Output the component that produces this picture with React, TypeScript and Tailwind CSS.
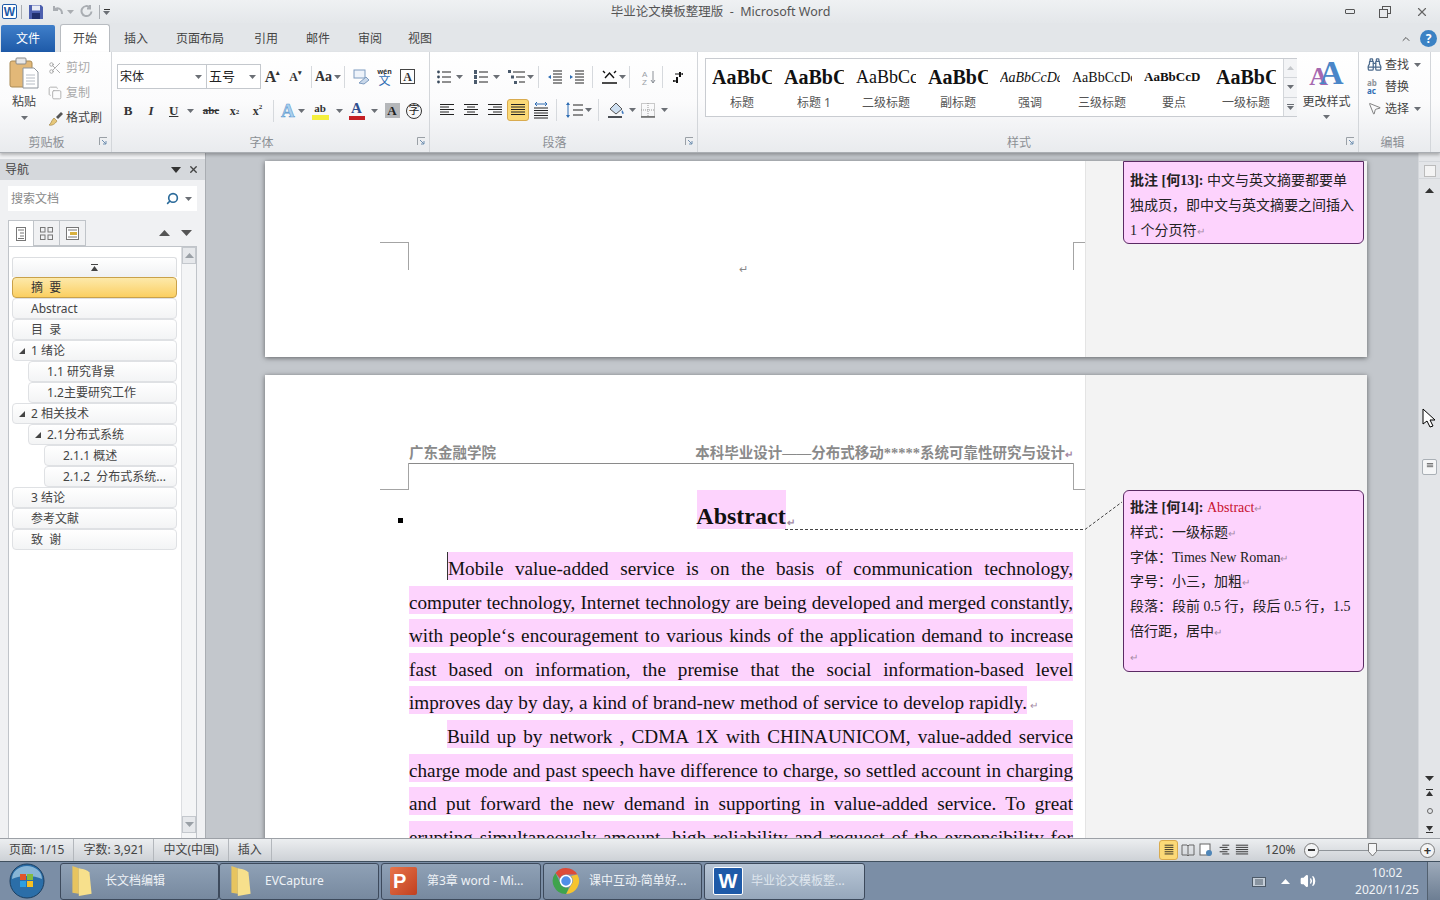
import type { ReactNode } from 'react';
import {
  Binoculars,
  ChevronUp,
  Copy,
  MousePointer2,
  Scissors,
  Search,
  Volume2,
  X,
} from 'lucide-react';

const serif = "font-['Liberation_Serif','Noto_Sans_CJK_SC',serif]";

function Caret({ className = '' }: { className?: string }) {
  return (
    <svg width="7" height="4" viewBox="0 0 7 4" className={`shrink-0 ${className}`}>
      <path d="M0 0h7L3.5 4z" fill="#6b6f75" />
    </svg>
  );
}

function Sep() {
  return <div className="h-[22px] w-px shrink-0 bg-[#d6d9dd]" />;
}

function Lines({ rows, size = 16 }: { rows: [number, number][]; size?: number }) {
  return (
    <svg width={size} height={size} viewBox="0 0 16 16">
      {rows.map(([a, b], i) => (
        <path key={i} d={`M${a} ${2.5 + i * 2.5}H${b}`} stroke="#222" strokeWidth="1" />
      ))}
    </svg>
  );
}

function Launcher() {
  return (
    <svg width="9" height="9" viewBox="0 0 9 9">
      <path d="M.5 8V.5H8" stroke="#9aa0a6" fill="none" />
      <path d="M3 3l4 4M7 4v3H4" stroke="#6f8fb0" fill="none" />
    </svg>
  );
}

function Group({ w, label, launcher = true, children }: { w: string; label: string; launcher?: boolean; children: ReactNode }) {
  return (
    <div className={`${w} flex h-full shrink-0 flex-col border-r border-[#d3d6da]`}>
      <div className="min-h-0 flex-1">{children}</div>
      <div className={`relative flex h-[21px] shrink-0 items-center justify-center pt-[2px] text-[12px] leading-none text-[#8b8f94] ${launcher ? 'pr-[18px]' : 'pr-[4px]'}`}>
        {label}
        {launcher && (
          <span className="absolute right-[3px] top-[6px] flex">
            <Launcher />
          </span>
        )}
      </div>
    </div>
  );
}

function BulletIcon() {
  return (
    <svg width="16" height="16" viewBox="0 0 16 16">
      {[3, 8, 13].map(y => (
        <g key={y}>
          <circle cx="2.5" cy={y} r="1.4" fill="#3a4a5c" />
          <path d={`M6 ${y}h9`} stroke="#222" />
        </g>
      ))}
    </svg>
  );
}

function NumberIcon() {
  return (
    <svg width="16" height="16" viewBox="0 0 16 16">
      {[3, 8, 13].map(y => (
        <g key={y}>
          <rect x="1" y={y - 2} width="3" height="4" fill="#4a5a6c" />
          <path d={`M6 ${y}h9`} stroke="#222" />
        </g>
      ))}
    </svg>
  );
}

function MultiIcon() {
  return (
    <svg width="18" height="16" viewBox="0 0 18 16">
      <rect x="0" y="1" width="3" height="3" fill="#4a5a6c" />
      <path d="M5 3h12" stroke="#222" />
      <rect x="3" y="6.5" width="3" height="3" fill="#4a5a6c" />
      <path d="M8 8h9" stroke="#222" />
      <rect x="6" y="12" width="3" height="3" fill="#4a5a6c" />
      <path d="M11 13h6" stroke="#222" />
    </svg>
  );
}

function IndentIcon({ flip = false }: { flip?: boolean }) {
  return (
    <svg width="16" height="16" viewBox="0 0 16 16">
      <path d="M6 2h9M6 5h9M6 8h9M6 11h9M6 14h9" stroke="#222" />
      <path d={flip ? 'M1 6v4l3-2z' : 'M4 6v4L1 8z'} fill="#2f6db3" />
    </svg>
  );
}

function SlotRow({ children, className = '' }: { children: ReactNode; className?: string }) {
  return <div className={`flex items-center ${className}`}>{children}</div>;
}

function Slot({ w, children, className = '' }: { w: string; children: ReactNode; className?: string }) {
  return <div className={`${w} flex shrink-0 items-center ${className}`}>{children}</div>;
}

function StyleItem({ sample, label, cls }: { sample: string; label: string; cls: string }) {
  return (
    <div className="flex w-[72px] shrink-0 flex-col items-center">
      <div className={`${serif} ${cls} flex h-[34px] w-[60px] items-center justify-start overflow-hidden whitespace-nowrap text-[#111]`}>
        {sample}
      </div>
      <div className="text-[12px] leading-[17px] text-[#555]">{label}</div>
    </div>
  );
}

function Ribbon() {
  return (
    <div className="z-10 flex h-[101px] shrink-0 border-b border-[#a9adb2] bg-gradient-to-b from-white via-[#fbfbfc] to-[#e9ebee] shadow-[0_2px_3px_rgba(0,0,0,0.25)]">
      <Group w="w-[112px]" label="剪贴板">
        <div className="flex">
          <div className="flex w-[48px] flex-col items-center pt-[5px]">
            <svg width="30" height="32" viewBox="0 0 30 32">
              <rect x="1" y="4" width="22" height="26" rx="2" fill="#e2b878" stroke="#a98a55" />
              <rect x="7" y="1" width="10" height="6" rx="1" fill="#e8e8e8" stroke="#8a8a8a" />
              <path d="M14 11h11l4 4v16H14z" fill="#fff" stroke="#8e959d" />
              <path d="M17 18h9M17 21h9M17 24h9M17 27h9" stroke="#b6bcc4" />
            </svg>
            <div className="mt-[4px] text-[12px] leading-[17px] text-[#444]">粘贴</div>
            <Caret className="mt-[6px]" />
          </div>
          <div className="flex flex-col gap-[7px] pt-[7px] text-[12px] leading-[18px]">
            <div className="flex items-center gap-[4px] text-[#a9a9a9]">
              <Scissors size={14} strokeWidth={1.5} className="text-[#a0a0a0]" />
              剪切
            </div>
            <div className="flex items-center gap-[4px] text-[#a9a9a9]">
              <Copy size={14} strokeWidth={1.5} className="text-[#a9a9a9]" />
              复制
            </div>
            <div className="flex items-center gap-[2px] text-[#444]">
              <svg width="16" height="15" viewBox="0 0 16 15">
                <path d="M1 14c2-1 2-4 5-7l3 3c-2 3-5 5-8 4z" fill="#e6c77a" stroke="#9a7d3a" strokeWidth=".6" />
                <path d="M8 6l5-5 2 2-5 5z" fill="#555" />
              </svg>
              格式刷
            </div>
          </div>
        </div>
      </Group>

      <Group w="w-[318px]" label="字体">
        <div className="pl-[5px] pt-[12px]">
          <SlotRow className="h-[25px]">
            <div className="flex h-[25px] w-[90px] shrink-0 items-center justify-between border border-[#c4c8cd] bg-white pl-[2px] pr-[4px] text-[12px] text-[#222]">
              宋体
              <Caret />
            </div>
            <div className="flex h-[25px] w-[54px] shrink-0 items-center justify-between border border-l-0 border-[#c4c8cd] bg-white pl-[2px] pr-[4px] text-[13px] text-[#222]">
              五号
              <Caret />
            </div>
            <Slot w="w-[23px]" className={`justify-center ${serif} text-[16px] font-bold text-[#333]`}>A<sup className="text-[7px] text-[#333]">▴</sup></Slot>
            <Slot w="w-[23px]" className={`justify-center ${serif} text-[12px] font-bold text-[#333]`}>A<sup className="text-[7px] text-[#333]">▾</sup></Slot>
            <div className="ml-[4px]"><Sep /></div>
            <Slot w="w-[32px]" className={`justify-center gap-[2px] ${serif} text-[14px] font-bold text-[#333]`}>Aa<Caret /></Slot>
            <Sep />
            <Slot w="w-[23px]" className="ml-[5px] justify-center">
              <svg width="17" height="16" viewBox="0 0 17 16">
                <rect x="1" y="1" width="11" height="8" fill="#eef3fa" stroke="#7f9cc0" />
                <path d="M6 14l7-6 3 3-5 4z" fill="#c9d8ea" stroke="#7f9cc0" />
              </svg>
            </Slot>
            <Slot w="w-[23px]" className="justify-center">
              <span className="flex flex-col items-center leading-none">
                <span className="text-[7px] font-bold leading-[7px] text-[#333]">wén</span>
                <span className="text-[12px] leading-[11px] text-[#2f6db3]">文</span>
              </span>
            </Slot>
            <Slot w="w-[23px]" className="justify-center">
              <span className={`${serif} flex h-[15px] w-[15px] items-center justify-center border border-[#444] text-[12px] font-bold leading-none text-[#333]`}>A</span>
            </Slot>
          </SlotRow>
          <SlotRow className={`mt-[9px] h-[25px] ${serif} text-[#333]`}>
            <Slot w="w-[22px]" className="justify-center text-[13px] font-bold">B</Slot>
            <Slot w="w-[24px]" className="justify-center text-[13px] font-bold italic">I</Slot>
            <Slot w="w-[36px]" className="gap-[9px] pl-[6px] text-[13px] font-bold"><span className="underline">U</span><Caret /></Slot>
            <Slot w="w-[24px]" className="justify-center text-[11px] font-bold line-through">abc</Slot>
            <Slot w="w-[23px]" className="justify-center text-[12px] font-bold">x<sub className="text-[7px]">2</sub></Slot>
            <Slot w="w-[23px]" className="justify-center text-[12px] font-bold">x<sup className="text-[7px]">2</sup></Slot>
            <div className="ml-[4px]"><Sep /></div>
            <Slot w="w-[30px]" className="ml-[4px] gap-[3px] pl-[3px] text-[19px] font-bold leading-none text-[#a9d0ee] [-webkit-text-stroke:0.6px_#5f9ad0]">A<Caret /></Slot>
            <Slot w="w-[37px]" className="gap-[7px] pl-[3px]">
              <span className="flex h-[18px] w-[18px] flex-col items-center justify-between">
                <span className="text-[11px] font-bold leading-[12px] text-[#333]">ab</span>
                <span className="h-[5px] w-[17px] bg-[#f4ef3c]" />
              </span>
              <Caret />
            </Slot>
            <Slot w="w-[36px]" className="gap-[6px] pl-[3px]">
              <span className="flex h-[19px] w-[17px] flex-col items-center">
                <span className="text-[15px] font-bold leading-[15px] text-[#2f4f8f]">A</span>
                <span className="h-[4px] w-[16px] bg-[#c41f24]" />
              </span>
              <Caret />
            </Slot>
            <Slot w="w-[22px]" className="justify-center">
              <span className="flex h-[15px] w-[15px] items-center justify-center bg-[#b5b7ba] text-[13px] font-bold leading-none text-[#222]">A</span>
            </Slot>
            <Slot w="w-[22px]" className="justify-center">
              <span className="flex h-[16px] w-[16px] items-center justify-center rounded-full border border-[#333] text-[11px] leading-none text-[#222]">字</span>
            </Slot>
          </SlotRow>
        </div>
      </Group>

      <Group w="w-[268px]" label="段落">
        <div className="pl-[6px] pt-[14px]">
          <SlotRow className="h-[22px]">
            <Slot w="w-[34px]" className="gap-[3px]"><BulletIcon /><Caret className="ml-[1px]" /></Slot>
            <Slot w="w-[36px]" className="gap-[4px] pl-[3px]"><NumberIcon /><Caret /></Slot>
            <Slot w="w-[32px]" className="gap-[1px] pl-[2px]"><MultiIcon /><Caret /></Slot>
            <Sep />
            <Slot w="w-[22px]" className="ml-[5px] justify-center"><IndentIcon /></Slot>
            <Slot w="w-[22px]" className="justify-center"><IndentIcon flip /></Slot>
            <div className="ml-[4px]"><Sep /></div>
            <Slot w="w-[36px]" className="gap-[1px] pl-[8px]">
              <svg width="17" height="14" viewBox="0 0 17 14">
                <path d="M1 13h15M4 8L8.500 3 13 8M2 1l2 2M15 1l-2 2" stroke="#111" strokeWidth="1.400" fill="none" />
              </svg>
              <Caret />
            </Slot>
            <Sep />
            <Slot w="w-[27px]" className="ml-[5px] justify-center">
              <svg width="16" height="17" viewBox="0 0 16 17">
                <text x="1" y="8" fontSize="8" fill="#9aa0a6" fontFamily="Liberation Sans">A</text>
                <text x="1" y="16" fontSize="8" fill="#9aa0a6" fontFamily="Liberation Sans">Z</text>
                <path d="M12 2v12M10 11l2 3 2-3" stroke="#8b9097" fill="none" />
              </svg>
            </Slot>
            <Sep />
            <Slot w="w-[22px]" className="ml-[4px] justify-center">
              <svg width="13" height="15" viewBox="0 0 13 15">
                <path d="M5 13V7M8 7V2" stroke="#111" strokeWidth="2" />
                <path d="M3 4h5M1 11h5" stroke="#111" />
                <path d="M11 3l-3 1 3 1zM1 10l3 1-3 1z" fill="#111" />
              </svg>
            </Slot>
          </SlotRow>
          <SlotRow className="mt-[11px] h-[22px]">
            <Slot w="w-[23px]" className="justify-start pl-[3px]"><Lines rows={[[1, 15], [1, 10], [1, 15], [1, 10], [1, 15]]} /></Slot>
            <Slot w="w-[24px]" className="justify-center"><Lines rows={[[1, 15], [4, 12], [1, 15], [4, 12], [1, 15]]} /></Slot>
            <Slot w="w-[24px]" className="justify-center"><Lines rows={[[1, 15], [6, 15], [1, 15], [6, 15], [1, 15]]} /></Slot>
            <Slot w="w-[22px]" className="h-[22px] justify-center rounded-[3px] border border-[#d9ab4f] bg-[#fbd977]"><Lines rows={[[1, 15], [1, 15], [1, 15], [1, 15], [1, 15]]} /></Slot>
            <Slot w="w-[22px]" className="ml-px justify-center">
              <svg width="16" height="18" viewBox="0 0 16 18">
                <path d="M2 3h12M4 1L2 3l2 2M12 1l2 2-2 2" stroke="#2f6db3" fill="none" />
                <path d="M1 7h14M1 9.500h14M1 12h14M1 14.500h14M1 17h14" stroke="#222" />
              </svg>
            </Slot>
            <div className="ml-[4px]"><Sep /></div>
            <Slot w="w-[34px]" className="ml-[7px] gap-[1px]">
              <svg width="20" height="18" viewBox="0 0 20 18">
                <path d="M4 2v14" stroke="#2f6db3" />
                <path d="M2 4l2-3 2 3zM2 14l2 3 2-3z" fill="#2f6db3" />
                <path d="M9 4h10M9 9h10M9 14h10" stroke="#222" />
              </svg>
              <Caret />
            </Slot>
            <Sep />
            <Slot w="w-[33px]" className="ml-[6px] gap-[3px] pl-[2px]">
              <svg width="19" height="18" viewBox="0 0 19 18">
                <path d="M3 8l6-6 6 6-6 5z" fill="#cfe0f2" stroke="#555" />
                <path d="M15 9c2 2 2 4 1 4s-2-2-1-4z" fill="#3d78bd" />
                <path d="M1 16h14" stroke="#4b4f55" strokeWidth="2" />
              </svg>
              <Caret />
            </Slot>
            <Slot w="w-[34px]" className="gap-[5px] pl-[2px]">
              <svg width="16" height="16" viewBox="0 0 16 16">
                <rect x="1.500" y="1.500" width="13" height="13" fill="none" stroke="#999" strokeDasharray="1 1" />
                <path d="M8 1v14M1 8h14" stroke="#999" strokeDasharray="1 1" />
                <path d="M1 15h14" stroke="#222" />
              </svg>
              <Caret />
            </Slot>
          </SlotRow>
        </div>
      </Group>

      <Group w="w-[661px]" label="样式">
        <div className="flex pl-[7px] pt-[6px]">
          <div className="flex h-[59px] w-[592px] shrink-0 border border-[#c9ccd1] bg-white">
            <div className="flex w-[577px] shrink-0 pt-[1px]">
              <StyleItem sample="AaBbCcD" label="标题" cls="text-[20px] font-bold" />
              <StyleItem sample="AaBbC" label="标题 1" cls="text-[20px] font-bold" />
              <StyleItem sample="AaBbCcD" label="二级标题" cls="text-[18px]" />
              <StyleItem sample="AaBbCcD" label="副标题" cls="text-[20px] font-bold" />
              <StyleItem sample="AaBbCcDd" label="强调" cls="text-[14px] italic" />
              <StyleItem sample="AaBbCcDd" label="三级标题" cls="text-[14px]" />
              <StyleItem sample="AaBbCcD" label="要点" cls="text-[13px] font-bold" />
              <StyleItem sample="AaBbC" label="一级标题" cls="text-[20px] font-bold" />
            </div>
            <div className="flex w-[14px] shrink-0 flex-col border-l border-[#d3d6da] bg-[#f3f4f6]">
              <div className="flex flex-1 items-center justify-center"><svg width="7" height="4"><path d="M0 4h7L3.500 0z" fill="#c4c7cb" /></svg></div>
              <div className="flex flex-1 items-center justify-center border-y border-[#d3d6da]"><Caret /></div>
              <div className="flex flex-1 flex-col items-center justify-center gap-[1px]"><div className="h-px w-[7px] bg-[#6b6f75]" /><Caret /></div>
            </div>
          </div>
          <div className="ml-[5px] flex w-[49px] shrink-0 flex-col items-center">
            <div className={`${serif} flex h-[32px] items-end font-bold leading-none`}>
              <span className="text-[26px] text-[#a668b0]">A</span>
              <span className="-ml-[9px] text-[34px] text-[#4a86c8]">A</span>
            </div>
            <div className="mt-[3px] whitespace-nowrap text-[12px] leading-[17px] text-[#444]">更改样式</div>
            <Caret className="mt-[5px]" />
          </div>
        </div>
      </Group>

      <Group w="w-[72px]" label="编辑" launcher={false}>
        <div className="flex flex-col gap-[3px] pl-[8px] pt-[3px] text-[12px] leading-[19px] text-[#444]">
          <div className="flex items-center gap-[3px]"><Binoculars size={15} strokeWidth={2} className="text-[#4c6a8c]" />查找<Caret className="ml-[2px]" /></div>
          <div className="flex items-center gap-[3px]">
            <span className="flex w-[15px] flex-col text-[8px] font-bold leading-[8px]"><span className="text-[#8f9499]">ab</span><span className="text-[#2f6db3]">ac</span></span>
            替换
          </div>
          <div className="flex items-center gap-[3px]"><MousePointer2 size={15} strokeWidth={1.3} className="text-[#666]" />选择<Caret className="ml-[2px]" /></div>
        </div>
      </Group>
    </div>
  );
}

const navItems: { text: string; indent: string; arrow?: boolean; active?: boolean }[] = [
  { text: '摘  要', indent: 'ml-0', active: true },
  { text: 'Abstract', indent: 'ml-0' },
  { text: '目  录', indent: 'ml-0' },
  { text: '1 绪论', indent: 'ml-0', arrow: true },
  { text: '1.1 研究背景', indent: 'ml-[16px]' },
  { text: '1.2主要研究工作', indent: 'ml-[16px]' },
  { text: '2 相关技术', indent: 'ml-0', arrow: true },
  { text: '2.1分布式系统', indent: 'ml-[16px]', arrow: true },
  { text: '2.1.1 概述', indent: 'ml-[32px]' },
  { text: '2.1.2  分布式系统...', indent: 'ml-[32px]' },
  { text: '3 结论', indent: 'ml-0' },
  { text: '参考文献', indent: 'ml-0' },
  { text: '致  谢', indent: 'ml-0' },
];

function NavPanel() {
  return (
    <div className="flex h-full w-[206px] shrink-0 flex-col border-r border-[#a9adb2] bg-[#f0f1f3] pt-[6px]">
      <div className="flex h-[21px] shrink-0 items-center justify-between bg-[#d5d8dc] pl-[5px] pr-[6px] text-[12px] text-[#444]">
        导航
        <span className="flex items-center gap-[7px]">
          <svg width="10" height="6"><path d="M0 0h10L5 6z" fill="#333" /></svg>
          <X size={11} strokeWidth={3} className="text-[#444]" />
        </span>
      </div>
      <div className="mx-[8px] mt-[6px] flex h-[25px] shrink-0 items-center justify-between bg-white pl-[3px] pr-[5px] text-[12px] text-[#8a8a8a]">
        搜索文档
        <span className="flex items-center gap-[6px]">
          <Search size={13} strokeWidth={3} className="-scale-x-100 text-[#2a6a9a]" />
          <Caret />
        </span>
      </div>
      <div className="mx-[8px] mt-[9px] flex h-[26px] shrink-0 items-end justify-between pr-[4px]">
        <div className="flex h-[26px]">
          <div className="flex w-[26px] items-center justify-center border border-b-0 border-[#c0c4c9] bg-white">
            <svg width="10" height="14" viewBox="0 0 10 14"><rect x=".5" y=".5" width="9" height="13" fill="none" stroke="#777" /><path d="M2 3h6M4 6h4M4 9h4M2 11.500h6" stroke="#777" /></svg>
          </div>
          <div className="flex w-[26px] items-center justify-center border-y border-r border-[#c0c4c9]">
            <svg width="13" height="13" viewBox="0 0 13 13" fill="none" stroke="#777"><rect x=".5" y=".5" width="4.500" height="4.500" /><rect x="8" y=".5" width="4.500" height="4.500" /><rect x=".5" y="8" width="4.500" height="4.500" /><rect x="8" y="8" width="4.500" height="4.500" /></svg>
          </div>
          <div className="flex w-[26px] items-center justify-center border-y border-r border-[#c0c4c9]">
            <svg width="13" height="13" viewBox="0 0 13 13"><rect x=".5" y=".5" width="12" height="12" fill="#fff" stroke="#777" /><path d="M2 3h9" stroke="#777" /><rect x="4" y="5" width="7" height="3" fill="#d9b13e" /><path d="M2 10h9" stroke="#777" /></svg>
          </div>
        </div>
        <div className="flex h-[24px] items-start gap-[11px] pr-[1px] pt-[8px]">
          <svg width="11" height="6"><path d="M0 6h11L5.500 0z" fill="#555" /></svg>
          <svg width="11" height="6"><path d="M0 0h11L5.500 6z" fill="#555" /></svg>
        </div>
      </div>
      <div className="mx-[8px] flex min-h-0 flex-1 border border-b-0 border-[#c0c4c9] bg-white">
        <div className="w-[170px] shrink-0 pl-[3px] pr-[2px] pt-[10px]">
          <div className="flex h-[20px] w-[165px] items-center justify-center rounded-t-[3px] border border-b-0 border-[#dcdee1] bg-gradient-to-b from-white to-[#f0f1f3]">
            <svg width="9" height="8"><path d="M1 .5h7" stroke="#444" /><path d="M1 7h7L4.500 2z" fill="#444" /></svg>
          </div>
          {navItems.map(item => (
            <div
              key={item.text}
              className={`${item.indent} flex h-[21px] items-center rounded-[4px] border text-[12px] leading-none ${
                item.active
                  ? 'border-[#c9a14a] bg-gradient-to-b from-[#fde9a9] to-[#fbcf5f] text-[#333]'
                  : 'border-[#dfe1e4] bg-gradient-to-b from-white to-[#f3f4f5] text-[#444]'
              }`}
            >
              <span className="flex w-[17px] shrink-0 justify-center">
                {item.arrow && <svg width="6" height="6"><path d="M6 0v6H0z" fill="#444" /></svg>}
              </span>
              <span className="whitespace-pre pl-px">{item.text}</span>
            </div>
          ))}
        </div>
        <div className="ml-[2px] flex flex-1 flex-col justify-between border-l border-[#dcdee1] bg-[#f4f5f6] pb-[5px]">
          <div className="flex h-[17px] items-center justify-center border border-[#c4c8cd] bg-[#e6e8eb]"><svg width="9" height="5"><path d="M0 5h9L4.500 0z" fill="#9aa0a6" /></svg></div>
          <div className="flex h-[17px] items-center justify-center border border-[#c4c8cd] bg-[#e6e8eb]"><svg width="9" height="5"><path d="M0 0h9L4.500 5z" fill="#9aa0a6" /></svg></div>
        </div>
      </div>
    </div>
  );
}

function CropMark({ className }: { className: string }) {
  return <div className={`absolute border-[#a4a4a4] ${className}`} />;
}

function Mark() {
  return <span className="text-[10px] text-[#a48aa4]">↵</span>;
}

function Balloon({ className, children }: { className: string; children: ReactNode }) {
  return (
    <div className={`${serif} ml-[37px] w-[241px] rounded-[6px] border border-[#5a2a63] bg-[#fdd3fd] px-[6px] text-[14px] text-[#222] ${className}`}>
      {children}
    </div>
  );
}

const bodyLines: { text: string; first?: boolean; last?: boolean; caret?: boolean }[] = [
  { text: 'Mobile value-added service is on the basis of communication technology,', first: true, caret: true },
  { text: 'computer technology, Internet technology are being developed and merged constantly,' },
  { text: 'with people‘s encouragement to various kinds of the application demand to increase' },
  { text: 'fast based on information, the premise that the social information-based level' },
  { text: 'improves day by day, a kind of brand-new method of service to develop rapidly.', last: true },
  { text: 'Build up by network , CDMA 1X with CHINAUNICOM, value-added service', first: true },
  { text: 'charge mode and past speech have difference to charge, so settled account in charging' },
  { text: 'and put forward the new demand in supporting in value-added service. To great' },
  { text: 'erupting simultaneously amount, high reliability and request of the expensibility for' },
];

function Document() {
  return (
    <div className="relative flex min-w-0 flex-1 flex-col items-start overflow-hidden bg-[#c3c7cc] pl-[59px] pt-[8px]">
      <div className="relative flex h-[196px] w-[1102px] shrink-0 bg-white shadow-[0_1px_5px_rgba(0,0,0,0.5)]">
        <div className="w-[820px] shrink-0" />
        <div className="flex-1 border-l border-[#e4e4e4] bg-[#f3f3f3]">
          <Balloon className="mt-0 h-[83px] rounded-t-none pt-[6px] leading-[25px]">
            <b>批注 [何13]:</b> 中文与英文摘要都要单独成页，即中文与英文摘要之间插入 1 个分页符<Mark />
          </Balloon>
        </div>
        <CropMark className="left-[115px] top-[81px] h-[28px] w-[29px] border-r border-t" />
        <CropMark className="left-[808px] top-[81px] h-[28px] w-[12px] border-l border-t" />
        <span className="absolute left-[474px] top-[100px] text-[11px] text-[#888]">↵</span>
      </div>

      <div className="relative mt-[18px] flex h-[600px] w-[1102px] shrink-0 bg-white shadow-[0_1px_5px_rgba(0,0,0,0.5)]">
        <div className={`${serif} w-[820px] shrink-0 pl-[144px] pr-[12px] pt-[69px]`}>
          <div className="flex h-[20px] items-center justify-between whitespace-nowrap border-b border-[#8a8a8a] pb-[1px] text-[14.5px] font-bold leading-none text-[#8a8a8a]">
            <span>广东金融学院</span>
            <span>本科毕业设计——分布式移动*****系统可靠性研究与设计<Mark /></span>
          </div>
          <div className="mt-[26px] flex justify-center">
            <div className="relative flex h-[39px] w-[89px] items-end justify-center whitespace-nowrap bg-[#fdd3fd] text-[24px] font-bold leading-[26px] text-[#111]">
              Abstract
              <span className="absolute right-[-9px] top-[15px]"><Mark /></span>
            </div>
          </div>
          <div className="mt-[23px]">
            {bodyLines.map(line => (
              <div
                key={line.text}
                className={`relative mb-[5.6px] h-[28px] bg-[#fdd3fd] text-justify text-[19.2px] leading-[34px] text-[#111] [text-align-last:justify] ${line.first ? 'ml-[38px]' : ''} ${line.last ? 'mr-[46px]' : ''} ${line.caret ? 'border-l border-[#333]' : ''}`}
              >
                {line.text}
                {line.last && <span className="absolute right-[-11px] top-0 leading-[34px] [text-align-last:left]"><Mark /></span>}
              </div>
            ))}
          </div>
        </div>
        <div className="flex-1 border-l border-[#e4e4e4] bg-[#f3f3f3] pt-[115px]">
          <Balloon className="h-[182px] pt-[5px] leading-[24.8px]">
            <div className="h-[24.8px]"><b>批注 [何14]:</b> <span className="text-[#c8102e]">Abstract</span><Mark /></div>
            <div className="h-[24.8px]">样式：一级标题<Mark /></div>
            <div className="h-[24.8px]">字体：Times New Roman<Mark /></div>
            <div className="h-[24.8px]">字号：小三，加粗<Mark /></div>
            <div className="h-[24.8px]">段落：段前 0.5 行，段后 0.5 行，1.5</div>
            <div className="h-[24.8px]">倍行距，居中<Mark /></div>
            <div className="h-[24.8px]"><Mark /></div>
          </Balloon>
        </div>
        <CropMark className="left-[115px] top-[88px] h-[27px] w-[29px] border-b border-r" />
        <CropMark className="left-[808px] top-[88px] h-[27px] w-[12px] border-b border-l" />
        <div className="absolute left-[133px] top-[143px] h-[5px] w-[5px] bg-black" />
        <svg className="absolute left-[520px] top-[110px]" width="340" height="50">
          <path d="M0 44.500H300L337 17" fill="none" stroke="#444" strokeDasharray="3 2" />
        </svg>
      </div>
    </div>
  );
}

function RightScroll() {
  return (
    <div className="flex w-[22px] shrink-0 flex-col items-center border-l border-[#d4d7db] bg-[#e3e5e8]">
      <div className="mt-[8px] flex h-[18px] w-full flex-col items-center border-y border-[#d4d7db]">
        <svg width="12" height="12" className="mt-[3px]"><rect x=".5" y=".5" width="11" height="11" fill="#f4f4f4" stroke="#bbb" /></svg>
      </div>
      <svg className="mt-[9px]" width="9" height="5"><path d="M0 5h9L4.500 0z" fill="#333" /></svg>
      <div className="mt-[266px] flex h-[16px] w-[15px] items-center justify-center rounded-[2px] border border-[#aab0b6] bg-[#f5f6f7]">
        <Lines rows={[[3, 13], [3, 13], [3, 13]]} size={10} />
      </div>
      <svg className="mt-[301px]" width="9" height="5"><path d="M0 0h9L4.500 5z" fill="#333" /></svg>
      <div className="mt-[8px] flex flex-col items-center gap-[11px]">
        <svg width="7" height="8"><path d="M0 .5h7" stroke="#333" /><path d="M0 7h7L3.500 2z" fill="#333" /></svg>
        <div className="h-[6px] w-[6px] rounded-full border border-[#666]" />
        <svg width="7" height="8"><path d="M0 7.500h7" stroke="#333" /><path d="M0 1h7L3.500 6z" fill="#333" /></svg>
      </div>
    </div>
  );
}

function StatusBar() {
  const cell = 'flex h-full items-center border-r border-[#b3b7bc] px-[9px] whitespace-nowrap';
  return (
    <div className="flex h-[23px] shrink-0 items-center justify-between border-t border-[#9ca0a6] bg-gradient-to-b from-[#eceef0] to-[#cdd1d6] text-[12px] text-[#444]">
      <div className="flex h-full">
        <div className={cell}>页面: 1/15</div>
        <div className={cell}>字数: 3,921</div>
        <div className={cell}>中文(中国)</div>
        <div className={cell}>插入</div>
      </div>
      <div className="flex items-center pr-[5px]">
        <div className="flex h-[20px] w-[19px] items-center justify-center rounded-[3px] border border-[#d9ab4f] bg-[#fbd977]">
          <Lines rows={[[3, 13], [3, 13], [3, 13], [3, 13], [3, 13]]} size={14} />
        </div>
        <div className="ml-[3px] flex items-center gap-[4px] text-[#666]">
          <svg width="14" height="14" viewBox="0 0 14 14" fill="none" stroke="#666"><path d="M1 2h5l1 1 1-1h5v10H8l-1 1-1-1H1zM7 3v10" /></svg>
          <svg width="14" height="14" viewBox="0 0 14 14"><rect x="1" y="1" width="10" height="11" fill="#fff" stroke="#666" /><circle cx="10" cy="10" r="3" fill="#4f86b8" /></svg>
          <Lines rows={[[6, 14], [3, 12], [6, 14], [3, 12], [6, 14]]} size={14} />
          <Lines rows={[[1, 15], [1, 15], [1, 15], [1, 15], [1, 15]]} size={14} />
        </div>
        <div className="ml-[16px] w-[36px] text-[12px]">120%</div>
        <div className="ml-[3px] flex h-[15px] w-[15px] items-center justify-center rounded-full border border-[#777] bg-[#f3f4f5]"><div className="h-[2px] w-[7px] bg-[#333]" /></div>
        <div className="relative flex w-[101px] items-center">
          <div className="h-px w-full bg-[#8f9499]" />
          <svg className="absolute left-[49px] top-[-7px]" width="9" height="14"><path d="M.5 .5h8v8L4.500 13 .5 8.500z" fill="#f4f5f6" stroke="#777" /></svg>
        </div>
        <div className="flex h-[15px] w-[15px] items-center justify-center rounded-full border border-[#777] bg-[#f3f4f5] text-[13px] font-bold leading-none text-[#333]">+</div>
      </div>
    </div>
  );
}

function Folder() {
  return (
    <svg width="26" height="32" viewBox="0 0 24 30" className="shrink-0">
      <path d="M3 1l6 2 0 24-6-1z" fill="#e7c45f" />
      <path d="M9 3c6 1 8 2 10 4l2 20-12 2z" fill="#f7e08c" />
    </svg>
  );
}

function TaskButton({ w, icon, label, gap, active = false }: { w: string; icon: ReactNode; label: string; gap: string; active?: boolean }) {
  return (
    <div className={`${w} ${gap} flex h-[37px] shrink-0 items-center overflow-hidden whitespace-nowrap rounded-[3px] border border-[#3d4a5c] pl-[8px] text-[12px] ${active ? 'bg-gradient-to-b from-[#b8c6d6] to-[#96a7bb] text-[#dfe6ee]' : 'bg-gradient-to-b from-[#8fa1b6] to-[#77899f] text-[#eef2f6]'}`}>
      {icon}
      <span>{label}</span>
    </div>
  );
}

function WordTile() {
  return (
    <span className="flex h-[28px] w-[30px] shrink-0 items-center justify-center rounded-[2px] border border-white bg-[#1e5aa8] font-['Liberation_Sans',sans-serif] text-[20px] font-bold leading-none text-white">W</span>
  );
}

function Taskbar() {
  return (
    <div className="flex h-[39px] shrink-0 items-center border-t border-[#40505f] bg-[#7b8ea6] text-white">
      <div className="flex w-[60px] shrink-0 justify-center pr-[6px]">
        <svg width="36" height="36" viewBox="0 0 36 36">
          <circle cx="18" cy="18" r="17" fill="#2b6ea8" stroke="#1c3f61" />
          <path d="M3 16a15 13 0 0 1 30 0c-8-4-22-4-30 0z" fill="#a8cde6" opacity=".75" />
          <rect x="11" y="11" width="6" height="6" fill="#e2552b" />
          <rect x="18" y="11" width="6" height="6" fill="#82bb3f" />
          <rect x="11" y="18" width="6" height="6" fill="#2d9fe0" />
          <rect x="18" y="18" width="6" height="6" fill="#f6c023" />
        </svg>
      </div>
      <div className="flex w-[319px] shrink-0">
        <TaskButton w="w-[159px]" gap="gap-[10px]" icon={<Folder />} label="长文档编辑" />
        <TaskButton w="w-[160px]" gap="gap-[11px]" icon={<Folder />} label="EVCapture" />
      </div>
      <div className="ml-[2px] flex gap-[2px]">
        <TaskButton
          w="w-[160px]"
          gap="gap-[10px]"
          icon={<span className="flex h-[28px] w-[27px] shrink-0 items-center justify-start rounded-[2px] bg-gradient-to-br from-[#e8744a] to-[#c1401f] pl-[3px] font-['Liberation_Sans',sans-serif] text-[20px] font-bold leading-none text-white">P</span>}
          label="第3章 word - Mi..."
        />
        <TaskButton
          w="w-[159px]"
          gap="gap-[9px]"
          icon={
            <svg width="28" height="28" viewBox="0 0 28 28" className="shrink-0">
              <path d="M14 1a13 13 0 0 1 11.300 6.500H14a6.500 6.500 0 0 0-6 4L3.500 6A13 13 0 0 1 14 1z" fill="#dd4b39" />
              <path d="M25.300 7.500A13 13 0 0 1 14 27l5.600-9.700A6.500 6.500 0 0 0 19 9z" fill="#f6c42e" />
              <path d="M14 27A13 13 0 0 1 3.500 6L8.800 17.500a6.500 6.500 0 0 0 8 2.900z" fill="#3fa34d" />
              <circle cx="14" cy="14" r="5.500" fill="#4f8ee8" stroke="#fff" strokeWidth="1.500" />
            </svg>
          }
          label="课中互动-简单好..."
        />
        <TaskButton w="w-[161px]" gap="gap-[8px]" icon={<WordTile />} label="毕业论文模板整..." active />
      </div>
      <div className="ml-auto flex items-center">
        <svg width="14" height="12" viewBox="0 0 14 12" className="mr-[15px]"><rect x=".5" y="2.500" width="13" height="9" fill="#c5ced8" stroke="#4d5a68" /><path d="M3 5h8M3 7h8M3 9h8" stroke="#4d5a68" /></svg>
        <svg width="9" height="5" className="mr-[10px]"><path d="M0 5h9L4.500 0z" fill="#fff" /></svg>
        <Volume2 size={16} className="mr-[38px] text-white" fill="#fff" />
        <div className="mr-[7px] flex w-[66px] flex-col items-center text-[12px] leading-[17px] text-[#f0f3f6]">
          <span>10:02</span>
          <span>2020/11/25</span>
        </div>
        <div className="h-[39px] w-[13px] border-l border-[#52606f] bg-gradient-to-b from-[#9daaba] to-[#6c7d92]" />
      </div>
    </div>
  );
}

export default function App() {
  const tabs = ['插入', '页面布局', '引用', '邮件', '审阅', '视图'];
  const tabW = ['w-[46px]', 'w-[82px]', 'w-[50px]', 'w-[54px]', 'w-[50px]', 'w-[50px]'];
  return (
    <div className="flex h-[900px] w-[1440px] flex-col overflow-hidden bg-[#e3e6e9] font-['Noto_Sans','Noto_Sans_CJK_SC',sans-serif]">
      {/* title bar */}
      <div className="relative flex h-[23px] shrink-0 items-center bg-gradient-to-b from-[#eff1f3] to-[#e4e7ea] pl-[2px]">
        <span className="flex h-[15px] w-[15px] items-center justify-center rounded-[2px] border border-[#1e5aa8] bg-white font-['Liberation_Sans',sans-serif] text-[12px] font-bold leading-none text-[#1e5aa8]">W</span>
        <div className="ml-[4px] h-[14px] w-px bg-[#a9adb2]" />
        <svg width="16" height="16" viewBox="0 0 16 16" className="ml-[6px]"><path d="M1 1h12l2 2v12H1z" fill="#4c5fae" /><rect x="4" y="1.500" width="8" height="5" fill="#e8ecf5" /><rect x="4" y="9" width="8" height="6" fill="#21306e" /></svg>
        <svg width="13" height="13" viewBox="0 0 13 13" fill="none" className="ml-[7px]"><path d="M3 1v4h4M3 5c3-3 8-2 8 4" stroke="#a9adb2" strokeWidth="2" /></svg>
        <Caret className="ml-[3px] opacity-50" />
        <svg width="13" height="13" viewBox="0 0 13 13" fill="none" className="ml-[6px]"><path d="M10 2.500a5 5 0 1 0 1.500 4M10 0v3.500H7" stroke="#a9adb2" strokeWidth="2" /></svg>
        <div className="ml-[6px] h-[14px] w-px bg-[#a9adb2]" />
        <span className="ml-[3px] flex flex-col items-center gap-[1px]"><span className="h-px w-[6px] bg-[#333]" /><Caret /></span>
        <div className="absolute inset-x-0 top-[3px] flex justify-center whitespace-pre pl-[1px] text-[12.5px] leading-[18px] text-[#555]">毕业论文模板整理版  -  Microsoft Word</div>
        <div className="ml-auto flex items-center">
          <div className="h-[5px] w-[10px] rounded-[1px] border border-[#555]" />
          <svg width="12" height="12" viewBox="0 0 12 12" className="ml-[24px]" fill="none" stroke="#555"><rect x="3.500" y=".5" width="8" height="7" /><rect x=".5" y="3.500" width="8" height="8" fill="#e8eaed" /></svg>
          <X size={14} strokeWidth={2} className="ml-[24px] mr-[11px] text-[#666]" />
        </div>
      </div>

      {/* tab row */}
      <div className="flex h-[29px] shrink-0 items-end justify-between">
        <div className="flex h-[28px] items-end text-[12px] text-[#444]">
          <div className="ml-px flex h-[27px] w-[54px] items-center justify-center rounded-t-[2px] bg-gradient-to-b from-[#3f7fca] to-[#1e5aa8] text-white">文件</div>
          <div className="ml-[5px] flex h-[28px] w-[50px] items-center justify-center rounded-t-[3px] border border-b-0 border-[#b8bcc1] bg-white">开始</div>
          <div className="ml-[3px] flex">
            {tabs.map((tab, i) => (
              <div key={tab} className={`${tabW[i]} flex h-[27px] items-center justify-center`}>{tab}</div>
            ))}
          </div>
        </div>
        <div className="flex h-[27px] items-center gap-[8px] pr-[3px]">
          <ChevronUp size={12} strokeWidth={2} className="text-[#555]" />
          <span className="flex h-[17px] w-[17px] items-center justify-center rounded-full bg-[#3b82c4] text-[12px] font-bold leading-none text-white">?</span>
        </div>
      </div>

      <Ribbon />

      {/* work area */}
      <div className="relative flex min-h-0 flex-1 bg-[#c3c7cc]">
        <NavPanel />
        <div className="flex min-w-0 flex-1 flex-col">
          <Document />
        </div>
        <RightScroll />
        <svg className="absolute left-[1422px] top-[255px]" width="14" height="21" viewBox="0 0 14 21">
          <path d="M1 1v15l4-3 3 6 3-1-3-6h5z" fill="#fff" stroke="#000" />
        </svg>
      </div>

      <StatusBar />
      <Taskbar />
    </div>
  );
}
